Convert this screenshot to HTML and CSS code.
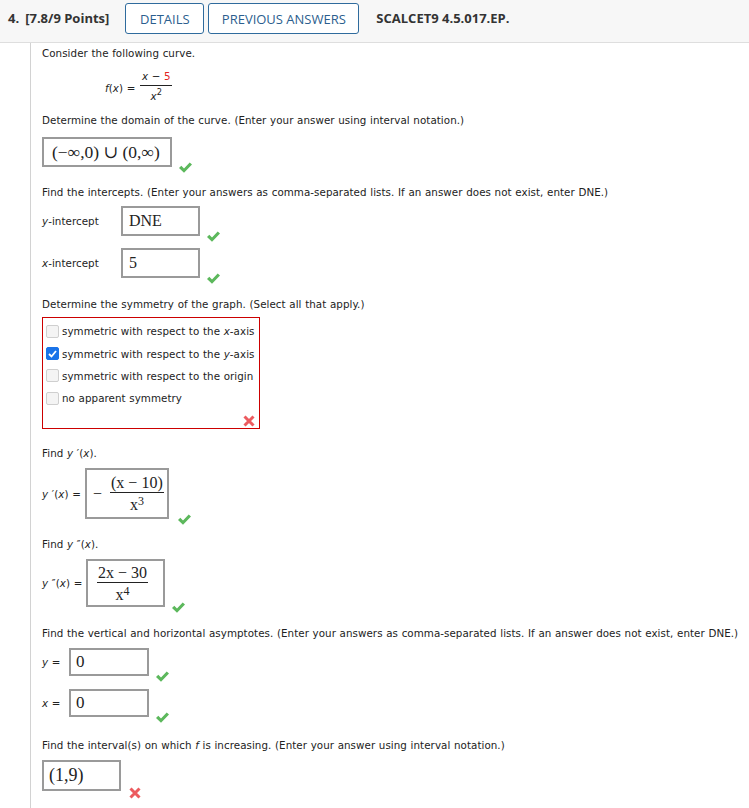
FILE: index.html
```
<!DOCTYPE html>
<html>
<head>
<meta charset="utf-8">
<link rel="stylesheet" href="styles.css">
</head>
<body>
<header class="qhead">
  <span class="qnum"><span class="qn">4.</span>[7.8/9 Points]</span>
  <button class="btn btn-details">DETAILS</button>
  <button class="btn btn-prev">PREVIOUS ANSWERS</button>
  <span class="qcode">SCALCET9 4.5.017.EP.</span>
</header>
<main class="content">
  <p class="txt t-consider">Consider the following curve.</p>
  <div class="formula">
    <span class="fx"><i>f</i>(<i>x</i>) =</span>
    <span class="frac">
      <span class="num"><i>x</i> − <span class="red">5</span></span>
      <span class="den"><i>x</i><sup>2</sup></span>
    </span>
  </div>
  <p class="txt t-domain">Determine the domain of the curve. (Enter your answer using interval notation.)</p>
  <div class="row r-domain">
    <div class="mbox b-domain">(−∞,0) ∪ (0,∞)</div>
    <svg class="ok" width="13" height="11" viewBox="0 0 13 11"><polygon points="0,6 2.3,3.8 5,6.4 10.7,0.4 13,2.6 5,10.8" fill="#5cb85c"/></svg>
  </div>

  <p class="txt t-int">Find the intercepts. (Enter your answers as comma-separated lists. If an answer does not exist, enter DNE.)</p>
  <div class="row r-yint">
    <span class="lbl l-int"><i>y</i>-intercept</span>
    <div class="mbox b-small b-int">DNE</div>
    <svg class="ok" width="13" height="11" viewBox="0 0 13 11"><polygon points="0,6 2.3,3.8 5,6.4 10.7,0.4 13,2.6 5,10.8" fill="#5cb85c"/></svg>
  </div>
  <div class="row r-xint">
    <span class="lbl l-int"><i>x</i>-intercept</span>
    <div class="mbox b-small b-int">5</div>
    <svg class="ok" width="13" height="11" viewBox="0 0 13 11"><polygon points="0,6 2.3,3.8 5,6.4 10.7,0.4 13,2.6 5,10.8" fill="#5cb85c"/></svg>
  </div>

  <p class="txt t-sym">Determine the symmetry of the graph. (Select all that apply.)</p>
  <div class="symbox">
    <div class="opt"><span class="cb"></span><span>symmetric with respect to the <i>x</i>-axis</span></div>
    <div class="opt"><span class="cb cb-on"><svg width="9" height="8" viewBox="0 0 9 8"><polyline points="1,4 3.5,6.5 8,1" fill="none" stroke="#fff" stroke-width="1.8"/></svg></span><span>symmetric with respect to the <i>y</i>-axis</span></div>
    <div class="opt"><span class="cb"></span><span>symmetric with respect to the origin</span></div>
    <div class="opt"><span class="cb"></span><span>no apparent symmetry</span></div>
    <div class="symfoot">
      <svg class="bad" width="12" height="12" viewBox="0 0 12 12"><path d="M1.5 1.5 L10.5 10.5 M10.5 1.5 L1.5 10.5" stroke="#ec5b5f" stroke-width="3"/></svg>
    </div>
  </div>

  <p class="txt t-yp">Find <i>y</i> ′(<i>x</i>).</p>
  <div class="row r-yp">
    <span class="lbl l-yp"><i>y</i> ′(<i>x</i>) =</span>
    <div class="mbox b-yp">
      <span class="mminus">−</span>
      <span class="mfrac"><span class="mnum">(x − 10)</span><span class="mden">x<sup>3</sup></span></span>
    </div>
    <svg class="ok ok-yp" width="13" height="11" viewBox="0 0 13 11"><polygon points="0,6 2.3,3.8 5,6.4 10.7,0.4 13,2.6 5,10.8" fill="#5cb85c"/></svg>
  </div>

  <p class="txt t-ypp">Find <i>y</i> ″(<i>x</i>).</p>
  <div class="row r-ypp">
    <span class="lbl l-ypp"><i>y</i> ″(<i>x</i>) =</span>
    <div class="mbox b-ypp">
      <span class="mfrac"><span class="mnum">2x − 30</span><span class="mden">x<sup>4</sup></span></span>
    </div>
    <svg class="ok" width="13" height="11" viewBox="0 0 13 11"><polygon points="0,6 2.3,3.8 5,6.4 10.7,0.4 13,2.6 5,10.8" fill="#5cb85c"/></svg>
  </div>

  <p class="txt t-asym">Find the vertical and horizontal asymptotes. (Enter your answers as comma-separated lists. If an answer does not exist, enter DNE.)</p>
  <div class="row r-ya">
    <span class="lbl l-as"><i>y</i> =</span>
    <div class="mbox b-as">0</div>
    <svg class="ok" width="13" height="11" viewBox="0 0 13 11"><polygon points="0,6 2.3,3.8 5,6.4 10.7,0.4 13,2.6 5,10.8" fill="#5cb85c"/></svg>
  </div>
  <div class="row r-xa">
    <span class="lbl l-as"><i>x</i> =</span>
    <div class="mbox b-as">0</div>
    <svg class="ok" width="13" height="11" viewBox="0 0 13 11"><polygon points="0,6 2.3,3.8 5,6.4 10.7,0.4 13,2.6 5,10.8" fill="#5cb85c"/></svg>
  </div>

  <p class="txt t-incr">Find the interval(s) on which <i>f</i> is increasing. (Enter your answer using interval notation.)</p>
  <div class="row r-incr">
    <div class="mbox b-incr">(1,9)</div>
    <svg class="ok bad-x" width="12" height="12" viewBox="0 0 12 12"><path d="M1.5 1.5 L10.5 10.5 M10.5 1.5 L1.5 10.5" stroke="#ec5b5f" stroke-width="3"/></svg>
  </div>
</main>
</body>
</html>
```
FILE: styles.css
```
html, body {
  margin: 0;
  padding: 0;
  background: #fff;
}
body {
  font-family: "DejaVu Sans", Verdana, sans-serif;
  color: #222;
}
.qhead {
  box-sizing: border-box;
  height: 43px;
  background: #f7f7f7;
  border-bottom: 1px solid #dedede;
  display: flex;
  align-items: flex-start;
  padding: 3px 0 0 8px;
  font-family: "Open Sans", sans-serif;
  font-size: 13px;
}
.qnum {
  font-weight: 700;
  color: #333;
  line-height: 31px;
  margin-right: 16px;
  white-space: nowrap;
}
.qn {
  margin-right: 6px;
}
.btn {
  box-sizing: border-box;
  height: 31px;
  padding: 0;
  margin: 0 4px 0 0;
  background: #fff;
  border: 1px solid #2f6b9d;
  border-radius: 3px;
  color: #2b5e8e;
  font-family: "Open Sans", sans-serif;
  font-size: 13px;
  font-weight: 500;
  white-space: nowrap;
  text-align: center;
  flex: none;
}
.btn-details { width: 79px; }
.btn-prev { width: 151px; margin-right: 17px; }
.qcode {
  font-weight: 700;
  color: #333;
  line-height: 31px;
  white-space: nowrap;
}
.content {
  margin-left: 30px;
  border-left: 1px solid #d2d2d2;
  padding: 3px 0 17px 11px;
  font-size: 10.3px;
  letter-spacing: 0.06px;
  word-spacing: 0.3px;
}
.txt {
  margin: 0;
  line-height: 14px;
  white-space: nowrap;
}
.formula {
  margin: 9px 0 0 63px;
  display: flex;
  align-items: center;
  line-height: 14px;
}
.fx { margin-right: 5px; margin-top: 3px; }
.frac {
  display: inline-flex;
  flex-direction: column;
  align-items: center;
  width: 32px;
}
.num {
  padding-bottom: 2px;
  border-bottom: 1px solid #222;
  width: 100%;
  text-align: center;
}
.den {
  padding-top: 3px;
}
.red { color: #e3261f; }
sup {
  font-size: 0.8em;
  line-height: 0;
  vertical-align: 0.6em;
}
.t-domain { margin-top: 10px; }
.row {
  display: flex;
  align-items: center;
}
.mbox {
  box-sizing: border-box;
  border: 2px solid #9a9a9a;
  font-family: "Liberation Serif", "DejaVu Serif", serif;
  color: #222;
  display: flex;
  align-items: center;
  background: #fff;
  letter-spacing: 0;
  word-spacing: 0;
  white-space: nowrap;
}
.mbox sup {
  font-size: 0.75em;
  vertical-align: 0.42em;
}
.ok {
  align-self: flex-end;
  margin-left: 7px;
  margin-bottom: -6px;
  flex: none;
}
.r-domain { margin-top: 10px; }
.b-domain {
  width: 130px;
  height: 30px;
  padding-left: 8px;
  font-size: 17.5px;
}
.t-int { margin-top: 18px; }
.r-yint { margin-top: 7px; }
.r-xint { margin-top: 12px; }
.l-int { width: 79px; }
.b-int {
  width: 79px;
  height: 30px;
  padding-left: 6px;
  font-size: 16px;
}
.t-sym { margin-top: 19px; }
.symbox {
  margin-top: 6px;
  width: 218px;
  height: 112px;
  box-sizing: border-box;
  border: 1px solid #cc0000;
  padding: 2px 4px 0 3px;
}
.opt {
  display: flex;
  align-items: center;
  height: 22.4px;
  white-space: nowrap;
}
.cb {
  box-sizing: border-box;
  width: 13px;
  height: 13px;
  border: 1px solid #cfcfcf;
  border-radius: 2px;
  background: #f4f4f4;
  margin-right: 3px;
  flex: none;
  display: flex;
  align-items: center;
  justify-content: center;
}
.cb-on {
  background: #1a73e8;
  border-color: #1a73e8;
}
.symfoot {
  display: flex;
  justify-content: flex-end;
  padding-top: 5px;
}
.t-yp { margin-top: 17px; }
.r-yp { margin-top: 8px; }
.l-yp { width: 43px; }
.b-yp {
  width: 84px;
  height: 51px;
  padding-left: 6px;
  font-size: 16px;
}
.mminus { margin-right: 8px; }
.mfrac {
  display: inline-flex;
  flex-direction: column;
  align-items: center;
  line-height: 17px;
}
.mnum {
  border-bottom: 1px solid #222;
  padding: 0 1px 1px;
}
.mden { padding-top: 3px; }
.ok-yp { margin-left: 9px; }
.t-ypp { margin-top: 18px; }
.r-ypp { margin-top: 8px; }
.l-ypp { width: 44px; }
.b-ypp {
  width: 79px;
  height: 48px;
  padding-left: 9px;
  font-size: 16px;
}
.t-asym { margin-top: 19px; }
.r-ya { margin-top: 8px; }
.r-xa { margin-top: 13px; }
.l-as { width: 27px; }
.b-as {
  width: 80px;
  height: 28px;
  padding-left: 5px;
  font-size: 17px;
}
.t-incr { margin-top: 21px; }
.r-incr { margin-top: 8px; }
.b-incr {
  width: 79px;
  height: 31px;
  padding-left: 5px;
  font-size: 18px;
}
.bad-x { margin-left: 8px; margin-bottom: -8px; }
```
